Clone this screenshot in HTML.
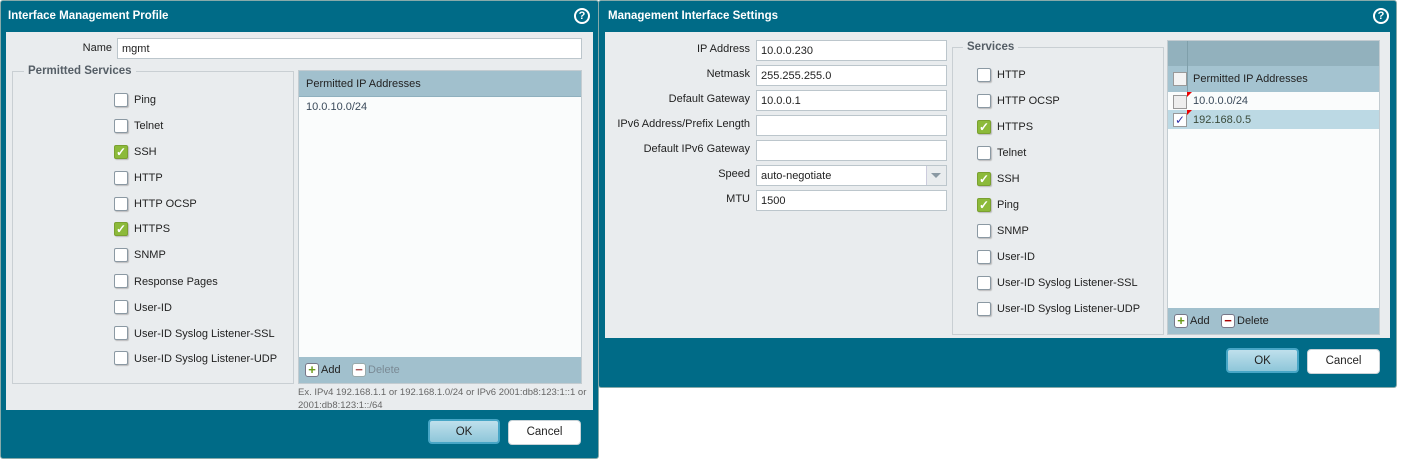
<!DOCTYPE html><html><head><style>
*{box-sizing:border-box;margin:0;padding:0}
body{width:1401px;height:459px;background:#fff;position:relative;overflow:hidden;font-family:"Liberation Sans",sans-serif;font-size:11px;color:#222;line-height:15px}
.a{position:absolute}
.dlg{background:#006b87;border:1px solid #8aa;border-radius:3px}
.title{color:#fff;font-weight:bold;font-size:11.5px}
.help{width:16px;height:16px;border-radius:50%;border:2px solid #fff;color:#fff;font-weight:bold;font-size:11px;text-align:center;line-height:12px}
.body{background:#e9ecee}
.inp{background:#fff;border:1px solid #bcc6cc;height:21px;line-height:20px;padding-left:4px;font-size:11px}
.lbl{text-align:right;font-size:11px}
.fs{border:1px solid #c9cfd3}
.leg{background:#e9ecee;color:#555e66;font-weight:bold;padding:0 4px;font-size:11.5px}
.cb{width:14px;height:14px;border:1px solid #8b99a3;border-radius:2px;background:#fff;box-shadow:1px 1px 1px #bbb}
.cb.on{background:#8cba3a;border-color:#7aa030;color:#fff;font-size:12px;line-height:12px;text-align:center;font-weight:bold}
.btn{height:25px;border-radius:4px;text-align:center;line-height:22px;font-size:11.5px}
.ok{background:linear-gradient(#bfe0ec,#8ec6d9);border:2px solid #47a6c6}
.cancel{background:#fff;border:1px solid #c9d3d8}
.ic{width:14px;height:14px;border:1px solid #778;border-radius:3px;background:#fff;font-weight:bold;font-size:13px;line-height:11px;text-align:center}
</style></head><body>

<div class="a dlg" style="left:0;top:0;width:599px;height:459px"></div>
<div class="a title" style="left:8px;top:9px">Interface Management Profile</div>
<div class="a help" style="left:574px;top:8px">?</div>
<div class="a body" style="left:6px;top:32px;width:587px;height:378px"></div>
<div class="a lbl" style="left:40px;top:41px;width:72px">Name</div>
<div class="a inp" style="left:117px;top:38px;width:465px">mgmt</div>
<div class="a fs" style="left:12px;top:71px;width:282px;height:313px"></div>
<div class="a leg" style="left:24px;top:64px">Permitted Services</div>

<div class="a cb" style="left:114px;top:93px"></div><div class="a" style="left:134px;top:93px">Ping</div>
<div class="a cb" style="left:114px;top:119px"></div><div class="a" style="left:134px;top:119px">Telnet</div>
<div class="a cb on" style="left:114px;top:145px">✓</div><div class="a" style="left:134px;top:145px">SSH</div>
<div class="a cb" style="left:114px;top:171px"></div><div class="a" style="left:134px;top:171px">HTTP</div>
<div class="a cb" style="left:114px;top:197px"></div><div class="a" style="left:134px;top:197px">HTTP OCSP</div>
<div class="a cb on" style="left:114px;top:222px">✓</div><div class="a" style="left:134px;top:222px">HTTPS</div>
<div class="a cb" style="left:114px;top:248px"></div><div class="a" style="left:134px;top:248px">SNMP</div>
<div class="a cb" style="left:114px;top:274px"></div><div class="a" style="left:134px;top:275px">Response Pages</div>
<div class="a cb" style="left:114px;top:300px"></div><div class="a" style="left:134px;top:301px">User-ID</div>
<div class="a cb" style="left:114px;top:326px"></div><div class="a" style="left:134px;top:327px">User-ID Syslog Listener-SSL</div>
<div class="a cb" style="left:114px;top:351px"></div><div class="a" style="left:134px;top:352px">User-ID Syslog Listener-UDP</div>

<div class="a" style="left:298px;top:70px;width:284px;height:314px;background:#fafcfc;border:1px solid #c3ccd1"></div>
<div class="a" style="left:299px;top:71px;width:282px;height:26px;background:#a1c0cd;border-bottom:1px solid #8fb0be"></div>
<div class="a" style="left:306px;top:77px">Permitted IP Addresses</div>
<div class="a" style="left:306px;top:100px;color:#3a4a5a">10.0.10.0/24</div>
<div class="a" style="left:299px;top:357px;width:282px;height:26px;background:#a1c0cd"></div>
<div class="a ic" style="left:305px;top:363px;color:#6a9a1a">+</div><div class="a" style="left:321px;top:363px">Add</div>
<div class="a ic" style="left:352px;top:363px;color:#a55;border-color:#9aa">−</div><div class="a" style="left:368px;top:363px;color:#7a8a95">Delete</div>
<div class="a" style="left:298px;top:386px;font-size:9.5px;color:#666;line-height:13px;white-space:nowrap">Ex. IPv4 192.168.1.1 or 192.168.1.0/24 or IPv6 2001:db8:123:1::1 or<br>2001:db8:123:1::/64</div>
<div class="a btn ok" style="left:428px;top:419px;width:72px">OK</div>
<div class="a btn cancel" style="left:508px;top:420px;width:73px">Cancel</div>

<div class="a dlg" style="left:598px;top:0;width:799px;height:388px"></div>
<div class="a title" style="left:608px;top:9px">Management Interface Settings</div>
<div class="a help" style="left:1373px;top:8px">?</div>
<div class="a body" style="left:605px;top:32px;width:785px;height:306px"></div>

<div class="a lbl" style="left:600px;top:42px;width:150px">IP Address</div>
<div class="a inp" style="left:756px;top:40px;width:191px">10.0.0.230</div>
<div class="a lbl" style="left:600px;top:67px;width:150px">Netmask</div>
<div class="a inp" style="left:756px;top:65px;width:191px">255.255.255.0</div>
<div class="a lbl" style="left:600px;top:92px;width:150px">Default Gateway</div>
<div class="a inp" style="left:756px;top:90px;width:191px">10.0.0.1</div>
<div class="a lbl" style="left:600px;top:117px;width:150px">IPv6 Address/Prefix Length</div>
<div class="a inp" style="left:756px;top:115px;width:191px"></div>
<div class="a lbl" style="left:600px;top:142px;width:150px">Default IPv6 Gateway</div>
<div class="a inp" style="left:756px;top:140px;width:191px"></div>
<div class="a lbl" style="left:600px;top:167px;width:150px">Speed</div>
<div class="a inp" style="left:756px;top:165px;width:191px">auto-negotiate</div>
<div class="a" style="left:926px;top:166px;width:20px;height:19px;background:#e9ecee;border-left:1px solid #ccd"></div>
<div class="a" style="left:931px;top:173px;width:0;height:0;border-left:5px solid transparent;border-right:5px solid transparent;border-top:5px solid #8a99a3"></div>
<div class="a lbl" style="left:600px;top:192px;width:150px">MTU</div>
<div class="a inp" style="left:756px;top:190px;width:191px">1500</div>

<div class="a fs" style="left:952px;top:47px;width:212px;height:288px"></div>
<div class="a leg" style="left:963px;top:40px">Services</div>
<div class="a cb" style="left:977px;top:68px"></div><div class="a" style="left:997px;top:68px">HTTP</div>
<div class="a cb" style="left:977px;top:94px"></div><div class="a" style="left:997px;top:94px">HTTP OCSP</div>
<div class="a cb on" style="left:977px;top:120px">✓</div><div class="a" style="left:997px;top:120px">HTTPS</div>
<div class="a cb" style="left:977px;top:146px"></div><div class="a" style="left:997px;top:146px">Telnet</div>
<div class="a cb on" style="left:977px;top:172px">✓</div><div class="a" style="left:997px;top:172px">SSH</div>
<div class="a cb on" style="left:977px;top:198px">✓</div><div class="a" style="left:997px;top:198px">Ping</div>
<div class="a cb" style="left:977px;top:224px"></div><div class="a" style="left:997px;top:224px">SNMP</div>
<div class="a cb" style="left:977px;top:250px"></div><div class="a" style="left:997px;top:250px">User-ID</div>
<div class="a cb" style="left:977px;top:276px"></div><div class="a" style="left:997px;top:276px">User-ID Syslog Listener-SSL</div>
<div class="a cb" style="left:977px;top:302px"></div><div class="a" style="left:997px;top:302px">User-ID Syslog Listener-UDP</div>

<div class="a" style="left:1167px;top:40px;width:213px;height:295px;background:#fafcfc;border:1px solid #c3ccd1"></div>
<div class="a" style="left:1168px;top:41px;width:211px;height:25px;background:#92b1bd"></div>
<div class="a" style="left:1168px;top:66px;width:211px;height:26px;background:#a4c3d0"></div>
<div class="a" style="left:1187px;top:41px;width:1px;height:51px;background:#7f9faa"></div>
<div class="a" style="left:1168px;top:110px;width:211px;height:19px;background:#bcd9e4"></div>
<div class="a cb" style="left:1173px;top:72px;box-shadow:none;border-radius:0;border-color:#999;background:#f3f3f3"></div>
<div class="a" style="left:1193px;top:72px">Permitted IP Addresses</div>
<div class="a cb" style="left:1173px;top:95px;box-shadow:none;border-radius:0;border-color:#999;background:#eee"></div>
<div class="a" style="left:1187px;top:92px;width:0;height:0;border-top:5px solid #e00;border-right:5px solid transparent"></div>
<div class="a" style="left:1193px;top:94px;color:#3a4a5a">10.0.0.0/24</div>
<div class="a cb" style="left:1173px;top:113px;box-shadow:none;border-radius:0;border-color:#999;background:#fff;color:#33a;font-size:12px;line-height:12px;text-align:center">✓</div>
<div class="a" style="left:1187px;top:110px;width:0;height:0;border-top:5px solid #e00;border-right:5px solid transparent"></div>
<div class="a" style="left:1193px;top:113px;color:#3a4a3a">192.168.0.5</div>
<div class="a" style="left:1168px;top:308px;width:211px;height:26px;background:#a1c0cd"></div>
<div class="a ic" style="left:1174px;top:314px;color:#6a9a1a">+</div><div class="a" style="left:1190px;top:314px">Add</div>
<div class="a ic" style="left:1221px;top:314px;color:#a00">−</div><div class="a" style="left:1237px;top:314px">Delete</div>

<div class="a btn ok" style="left:1226px;top:348px;width:73px">OK</div>
<div class="a btn cancel" style="left:1307px;top:349px;width:73px">Cancel</div>
</body></html>
